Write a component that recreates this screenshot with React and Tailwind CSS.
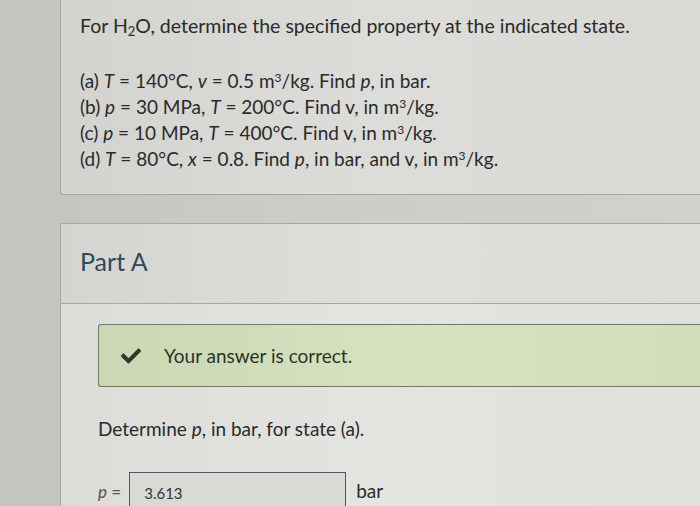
import React from "react";
import { FaCheck } from "react-icons/fa";

const I = ({ children }) => <span className="italic">{children}</span>;
const Cube = () => <sup className="text-[12px]">3</sup>;

export default function App() {
  return (
    <div
      className="w-[700px] h-[506px] overflow-hidden bg-gradient-to-r from-[#c4c4bf] via-[#cdcdc9] to-[#d0d0cc] pl-[60px] text-[#2a2a2a]"
      style={{ fontFamily: "Lato, 'Open Sans', sans-serif" }}
    >
      {/* Question card */}
      <div className="-mt-[10px] h-[205px] border border-t-0 border-r-0 border-[#a8a8a3] rounded-bl-[3px] bg-gradient-to-r from-[#d3d3cf] via-[#dcdcd8] to-[#d9d9d5] pl-[19px] pt-[23px]">
        <p className="text-[19.5px] leading-[26px]">
          For H<sub className="text-[13px]">2</sub>O, determine the specified property at the indicated state.
        </p>
        <div className="mt-[29px] text-[19px] leading-[26px]">
          <p>
            (a) <I>T</I> = 140°C, <I>v</I> = 0.5 m<Cube />/kg. Find <I>p</I>, in bar.
          </p>
          <p>
            (b) <I>p</I> = 30 MPa, <I>T</I> = 200°C. Find v, in m<Cube />/kg.
          </p>
          <p>
            (c) <I>p</I> = 10 MPa, <I>T</I> = 400°C. Find v, in m<Cube />/kg.
          </p>
          <p>
            (d) <I>T</I> = 80°C, <I>x</I> = 0.8. Find <I>p</I>, in bar, and v, in m<Cube />/kg.
          </p>
        </div>
      </div>

      {/* Part A card */}
      <div className="mt-[28px] border border-r-0 border-b-0 border-[#a8a8a3] rounded-tl-[3px]">
        <div className="h-[80px] border-b border-[#a8a8a3] bg-gradient-to-r from-[#d4d4d0] via-[#dededa] to-[#dcdcd8] pl-[19px] pt-[22px]">
          <h2 className="text-[25px] leading-[30px] text-[#2d4a5b]">Part A</h2>
        </div>
        <div className="bg-gradient-to-r from-[#dcdcd8] via-[#e4e4e0] to-[#e0e0dc] pl-[37px] pt-[20px] h-[230px]">
          <div className="h-[63px] flex items-center border border-r-0 border-[#6f7a60] rounded-l-[3px] bg-gradient-to-r from-[#cbd7b3] via-[#d6e1c0] to-[#d2ddbb] pl-[20px]">
            <FaCheck className="text-[#2b3a29] w-[24px] h-[20px]" />
            <span className="ml-[21px] text-[19px] leading-[26px] text-[#2a3328]">Your answer is correct.</span>
          </div>
          <p className="mt-[29px] text-[19px] leading-[26px]">
            Determine <I>p</I>, in bar, for state (a).
          </p>
          <div className="mt-[30px] flex items-start">
            <span className="mt-[9px] text-[17px] leading-[22px] text-[#555]">
              <I>p</I> =
            </span>
            <div className="ml-[8px] w-[217px] h-[40px] border border-[#555] bg-[#d9d9d5] pl-[14px] pt-[9px] text-[15px] leading-[22px] text-[#333]">
              3.613
            </div>
            <span className="ml-[10px] mt-[7px] text-[19px] leading-[24px]">bar</span>
          </div>
        </div>
      </div>
    </div>
  );
}
